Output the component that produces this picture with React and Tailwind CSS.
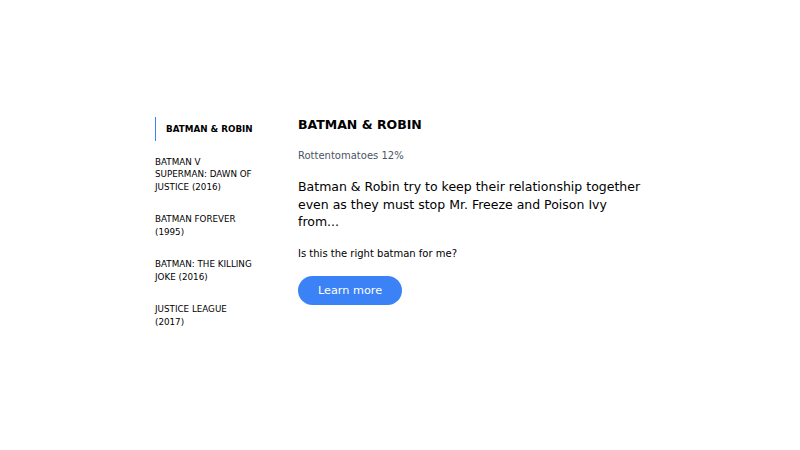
import React from "react";

const items = [
  "BATMAN & ROBIN",
  "BATMAN V SUPERMAN: DAWN OF JUSTICE (2016)",
  "BATMAN FOREVER (1995)",
  "BATMAN: THE KILLING JOKE (2016)",
  "JUSTICE LEAGUE (2017)",
];

export default function App() {
  return (
    <div
      className="w-full h-screen bg-white flex items-center justify-center text-black"
      style={{ fontFamily: '"DejaVu Sans", sans-serif' }}
    >
      <div className="flex items-start w-[490px] gap-[44px]">
        <nav className="flex flex-col gap-[10px] w-[99px] shrink-0">
          {items.map((t, i) =>
            i === 0 ? (
              <div
                key={t}
                className="border-l-[1.5px] border-[#3b82f6] pl-[10px] py-[5.5px] text-[8.75px] leading-[12.5px] font-bold whitespace-nowrap"
              >
                {t}
              </div>
            ) : (
              <div key={t} className="py-[5px] text-[8.75px] leading-[12.5px]">
                {t}
              </div>
            )
          )}
        </nav>
        <div className="flex flex-col flex-1">
          <h1 className="text-[12.5px] leading-[16px] font-bold">BATMAN &amp; ROBIN</h1>
          <p className="mt-[15.5px] text-[10px] leading-[13px] text-gray-600">Rottentomatoes 12%</p>
          <p className="mt-[16.75px] text-[12.5px] leading-[17.5px]">
            Batman &amp; Robin try to keep their relationship together even as they must stop Mr. Freeze and Poison Ivy from...
          </p>
          <p className="mt-[15.75px] text-[10px] leading-[13px]">Is this the right batman for me?</p>
          <div className="mt-[16.5px]">
            <button className="w-[104px] h-[29px] rounded-full bg-[#3b82f6] text-white text-[11.25px] leading-[29px]">
              Learn more
            </button>
          </div>
        </div>
      </div>
    </div>
  );
}
